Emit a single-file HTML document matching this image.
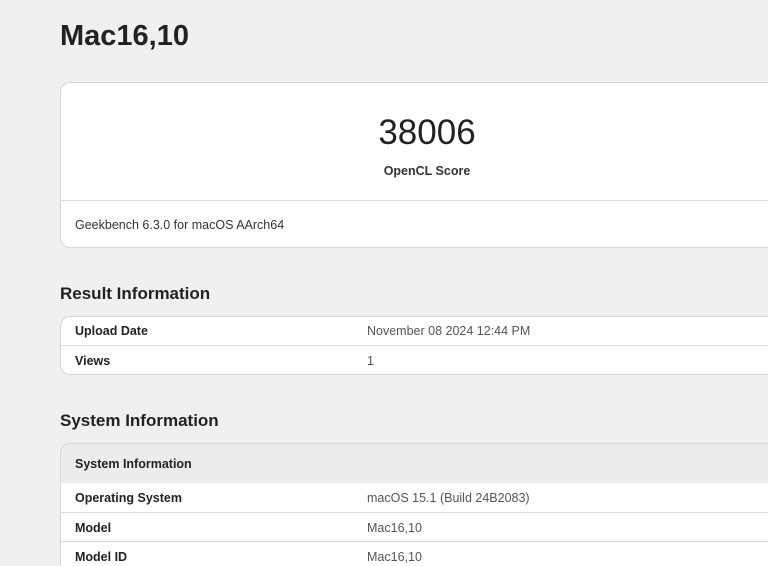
<!DOCTYPE html>
<html><head><style>
html{overflow:hidden;height:566px}
body{margin:0;width:768px;height:566px;overflow:hidden;background:#f0f0f0;font-family:"Liberation Sans",sans-serif;color:#222;position:relative}
.a{position:absolute}
.card{position:absolute;left:60px;width:740px;background:#fff;border:1px solid #d6d6d6;border-radius:10px;overflow:hidden;box-sizing:border-box}
.row{position:absolute;left:0;right:0;border-top:1px solid #dedede;font-size:12.5px}
.row .l{position:absolute;left:14px;font-weight:bold;color:#222}
.row .v{position:absolute;left:306px;color:#555}
h2{position:absolute;margin:0;font-size:17px;font-weight:bold;left:60px;color:#222}
</style></head><body>
<div class="a" style="left:60px;top:20px;font-size:29px;font-weight:bold;color:#222">Mac16,10</div>
<div class="card" style="top:82px;height:166px">
 <div class="a" style="left:0;width:732px;text-align:center;top:30px;font-size:35px;color:#222">38006</div>
 <div class="a" style="left:0;width:732px;text-align:center;top:81px;font-size:12.5px;font-weight:bold;color:#333">OpenCL Score</div>
 <div class="row" style="top:117px;height:48px"><span class="a" style="left:14px;top:17px;color:#333">Geekbench 6.3.0 for macOS AArch64</span></div>
</div>
<h2 style="top:284px">Result Information</h2>
<div class="card" style="top:316px;height:59px">
 <div class="row" style="top:-1px;height:29px;border-top:none"><span class="l" style="top:8px">Upload Date</span><span class="v" style="top:8px">November 08 2024 12:44 PM</span></div>
 <div class="row" style="top:28px;height:29px"><span class="l" style="top:8px">Views</span><span class="v" style="top:8px">1</span></div>
</div>
<h2 style="top:411px">System Information</h2>
<div class="card" style="top:443px;height:123px;border-bottom:none;border-radius:10px 10px 0 0">
 <div class="a" style="left:0;right:0;top:0;height:39px;background:#ececec"><span class="a" style="left:14px;top:13px;font-size:12.5px;font-weight:bold">System Information</span></div>
 <div class="row" style="top:39px;height:29px;border-top:none"><span class="l" style="top:8px">Operating System</span><span class="v" style="top:8px">macOS 15.1 (Build 24B2083)</span></div>
 <div class="row" style="top:68px;height:29px"><span class="l" style="top:8px">Model</span><span class="v" style="top:8px">Mac16,10</span></div>
 <div class="row" style="top:97px;height:29px"><span class="l" style="top:8px">Model ID</span><span class="v" style="top:8px">Mac16,10</span></div>
</div>
</body></html>
